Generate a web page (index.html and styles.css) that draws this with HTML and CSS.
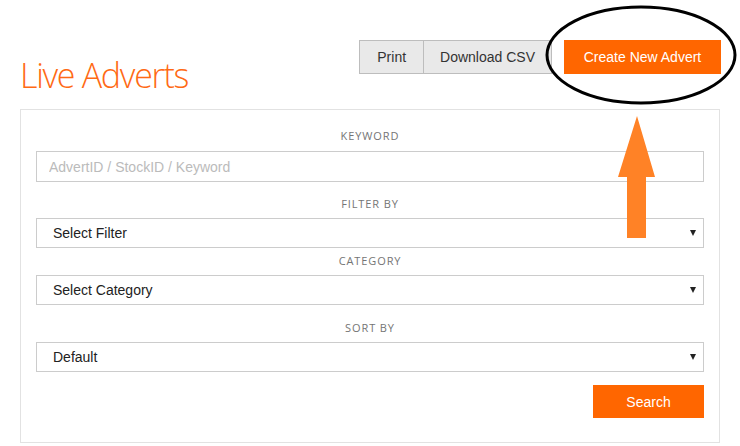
FILE: index.html
```html
<!DOCTYPE html>
<html lang="en">
<head>
<meta charset="utf-8">
<title>Live Adverts</title>
<link rel="stylesheet" href="styles.css">
</head>
<body>
<div class="page">
  <header class="top">
    <h1 class="title">Live Adverts</h1>
    <div class="actions">
      <div class="btn-group">
        <button class="btn btn-light btn-print">Print</button>
        <button class="btn btn-light">Download CSV</button>
      </div>
      <button class="btn btn-primary btn-create">Create New Advert</button>
    </div>
  </header>

  <form class="panel">
    <label class="label label-first">KEYWORD</label>
    <input class="field input" type="text" placeholder="AdvertID / StockID / Keyword">

    <label class="label">FILTER BY</label>
    <div class="select-wrap">
      <select class="field select"><option>Select Filter</option></select>
    </div>

    <label class="label label-tight">CATEGORY</label>
    <div class="select-wrap">
      <select class="field select"><option>Select Category</option></select>
    </div>

    <label class="label label-loose">SORT BY</label>
    <div class="select-wrap">
      <select class="field select"><option>Default</option></select>
    </div>

    <div class="search-row">
      <button type="button" class="btn btn-primary btn-search">Search</button>
    </div>
  </form>

  <svg class="annotation" width="740" height="446" viewBox="0 0 740 446" aria-hidden="true">
    <ellipse cx="641" cy="55" rx="94" ry="48" fill="none" stroke="#000" stroke-width="3"/>
    <polygon points="637,116 655,177 646,177 646,238 627,238 627,177 618,177" fill="#ff8226"/>
  </svg>
</div>
</body>
</html>
```

FILE: styles.css
```css
* { box-sizing: border-box; }

html, body {
  margin: 0;
  padding: 0;
  background: #fff;
}

body {
  font-family: "Liberation Sans", Arial, sans-serif;
  font-size: 14px;
  color: #333;
}

.page {
  position: relative;
  width: 740px;
  height: 446px;
  overflow: hidden;
}

.top {
  display: flex;
  justify-content: space-between;
  align-items: flex-start;
  height: 109px;
  padding: 40px 19px 0 20px;
}

.title {
  margin: 15px 0 0 0;
  font-family: "Open Sans", sans-serif;
  font-weight: 300;
  font-size: 34px;
  line-height: 40px;
  letter-spacing: -1.3px;
  color: #ff6a14;
}

.actions {
  display: flex;
  gap: 12px;
}

.btn-group {
  display: flex;
}

.btn {
  font-family: "Liberation Sans", Arial, sans-serif;
  font-size: 14px;
  height: 34px;
  border: 1px solid transparent;
  border-radius: 0;
  cursor: pointer;
  padding: 0 16px;
}

.btn-print {
  padding: 0 17px;
}

.btn-light {
  background: #e9e9e9;
  border-color: #bdbdbd;
  color: #333;
}

.btn-light + .btn-light {
  border-left: none;
}

.btn-primary {
  background: #ff6600;
  border-color: #ff6600;
  color: #fff;
}

.btn-create {
  width: 157px;
}

.panel {
  margin: 0 20px;
  border: 1px solid #e2e2e2;
  padding: 18px 15px 24px 15px;
  display: flex;
  flex-direction: column;
}

.panel > * {
  flex-shrink: 0;
}

.label {
  display: block;
  text-align: center;
  font-family: "Open Sans", sans-serif;
  font-size: 11px;
  line-height: 15px;
  color: #757575;
  letter-spacing: 0.9px;
  margin: 14px 0 7px;
}

.label-first {
  margin: 0 0 8px;
}

.label-tight {
  margin-top: 5px;
}

.label-loose {
  margin-top: 15px;
}

.field {
  display: block;
  width: 100%;
  height: 31px;
  border: 1px solid #cccccc;
  border-radius: 0;
  background: #fff;
  font-family: "Liberation Sans", Arial, sans-serif;
  font-size: 14px;
  color: #222;
  outline: none;
  margin: 0;
}

.input {
  padding: 0 12px;
}

.input::placeholder {
  color: #bbbbbb;
}

.select-wrap {
  position: relative;
}

.select {
  -webkit-appearance: none;
  appearance: none;
  height: 30px;
  padding: 0 30px 0 16px;
}

.select-wrap::after {
  content: "";
  position: absolute;
  right: 8px;
  top: 12px;
  width: 0;
  height: 0;
  border-left: 3.5px solid transparent;
  border-right: 3.5px solid transparent;
  border-top: 6px solid #222;
  pointer-events: none;
}

.search-row {
  display: flex;
  justify-content: flex-end;
  margin-top: 13px;
}

.btn-search {
  width: 111px;
  height: 33px;
}

.annotation {
  position: absolute;
  top: 0;
  left: 0;
  pointer-events: none;
}
```
